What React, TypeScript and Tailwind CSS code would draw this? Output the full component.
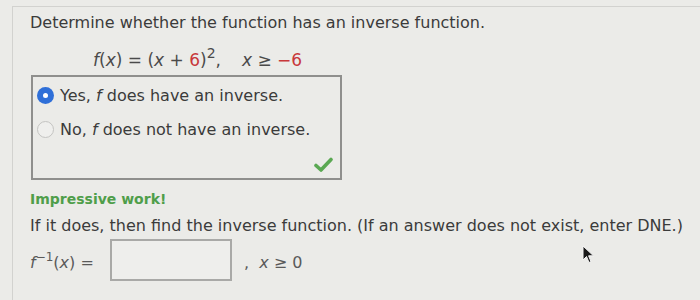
import React from 'react';

const font = { fontFamily: '"DejaVu Sans", Verdana, sans-serif' };

function Radio({ checked }: { checked: boolean }) {
  if (checked) {
    return (
      <span className="flex h-[17px] w-[17px] items-center justify-center rounded-full bg-[#2f6fd8]">
        <span className="h-[5px] w-[5px] rounded-full bg-white" />
      </span>
    );
  }
  return <span className="h-[17px] w-[17px] rounded-full border border-[#c4c4c2] bg-[#efefed]" />;
}

function Check() {
  return (
    <svg width="19" height="15" viewBox="0 0 19 15">
      <path d="M2 8.5 L7 13 L17 2.5" fill="none" stroke="#5aa852" strokeWidth="3.6" strokeLinecap="round" strokeLinejoin="round" />
    </svg>
  );
}

function Cursor() {
  return (
    <svg width="14" height="20" viewBox="0 0 14 20" className="absolute left-[581px] top-[245px]">
      <path d="M2 1 L2 15 L5.5 11.5 L8 17.5 L10 16.6 L7.6 10.8 L12.5 10.8 Z" fill="#1a1a1a" stroke="#f4f4f4" strokeWidth="1" />
    </svg>
  );
}

export default function App() {
  return (
    <div className="relative h-[300px] w-[700px] overflow-hidden bg-[#ebebe8] text-[#3b3b3b]" style={font}>
      <div className="ml-[12px] mt-[6px] h-[294px] border-l border-t border-[#d2d2cf] pl-[17px]">
        <div className="flex h-[30px] items-center pt-[2px] text-[16px]">
          Determine whether the function has an inverse function.
        </div>
        <div className="flex h-[38px] items-center pl-[63px] pt-[9px] text-[17px] text-[#4a4a4a]">
          <i>f</i>(<i>x</i>) = (<i>x</i>&nbsp;+&nbsp;<span className="text-[#c8383a]">6</span>)
          <sup className="relative -top-[8px] text-[14px]">2</sup>,
          <span className="ml-[21px]">
            <i>x</i> ≥ <span className="text-[#c8383a]">−6</span>
          </span>
        </div>
        <div className="ml-[1px] w-[311px] border-2 border-[#8f8f8d] pb-[6px] pl-[4px] pr-[7px] pt-[5px] text-[16px]">
          <div className="flex h-[27px] items-center gap-[6px]">
            <Radio checked />
            <span>
              Yes, <i>f</i> does have an inverse.
            </span>
          </div>
          <div className="mt-[7px] flex h-[27px] items-center gap-[6px]">
            <Radio checked={false} />
            <span>
              No, <i>f</i> does not have an inverse.
            </span>
          </div>
          <div className="flex h-[29px] items-end justify-end">
            <Check />
          </div>
        </div>
        <div className="mt-[9px] flex h-[20px] items-center text-[14px] font-bold text-[#4f9e4a]">
          Impressive work!
        </div>
        <div className="mt-[5px] flex h-[24px] items-center text-[16px]">
          If it does, then find the inverse function. (If an answer does not exist, enter DNE.)
        </div>
        <div className="mt-[1px] flex items-center text-[16px] text-[#5a5a5a]">
          <span className="w-[80px] pt-[5px]">
            <i>f</i>
            <sup className="relative -top-[7px] text-[12px]">−1</sup>(<i>x</i>) =
          </span>
          <div className="h-[42px] w-[122px] border-2 border-[#a9a9a7] bg-[#eeeeec]" />
          <span className="ml-[12px] pt-[5px]">
            , &nbsp;<i>x</i> ≥ 0
          </span>
        </div>
      </div>
      <Cursor />
    </div>
  );
}
